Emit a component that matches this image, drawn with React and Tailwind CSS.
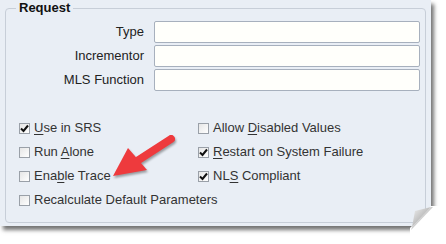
import React from "react";

const fields = ["Type", "Incrementor", "MLS Function"];

// label text with one underlined letter (access key)
const Key = ({ text, at }) => {
  if (at < 0) return <span>{text}</span>;
  return (
    <span>
      {text.slice(0, at)}
      <span className="underline underline-offset-2">{text[at]}</span>
      {text.slice(at + 1)}
    </span>
  );
};

const Check = ({ checked, text, at }) => (
  <label className="flex items-center h-[24px] gap-[4px] text-[13px] text-[#333] whitespace-nowrap">
    <span className="w-[11px] h-[11px] border border-[#9aa0a8] bg-gradient-to-br from-[#e6e6e6] to-white flex items-center justify-center">
      {checked && (
        <svg width="9" height="9" viewBox="0 0 9 9">
          <path d="M1 4.5 L3.5 7 L8 1.5" fill="none" stroke="#111" strokeWidth="2" />
        </svg>
      )}
    </span>
    <Key text={text} at={at} />
  </label>
);

export default function App() {
  return (
    <div
      className="relative w-[446px] h-[244px] bg-white"
      style={{ fontFamily: '"Liberation Sans", Arial, sans-serif' }}
    >
      <div className="w-[431px] h-[226px] bg-[#e9eef5] px-[5px] shadow-[3px_4px_4px_rgba(0,0,0,0.55)]">
        <fieldset className="h-[223px] border border-[#c7ced8] rounded-[4px] pl-[1px] pr-[4px]">
          <legend className="ml-[9px] px-[3px] text-[13px] leading-[16px] font-bold text-[#111]">
            Request
          </legend>
          <div className="mt-[5px] flex flex-col gap-[2px]">
            {fields.map((f) => (
              <div key={f} className="flex items-center">
                <span className="w-[137px] text-right text-[13px] text-[#222]">{f}</span>
                <input className="ml-[10px] w-[266px] h-[22px] bg-[#fffffb] border border-[#a7b0bd] rounded-[2px] outline-none" />
              </div>
            ))}
          </div>
          <div className="mt-[25px] pl-[12px] grid grid-cols-[179px_1fr]">
            <Check checked text="Use in SRS" at={0} />
            <Check text="Allow Disabled Values" at={6} />
            <Check text="Run Alone" at={4} />
            <Check checked text="Restart on System Failure" at={0} />
            <Check text="Enable Trace" at={3} />
            <Check checked text="NLS Compliant" at={2} />
            <div className="col-span-2">
              <Check text="Recalculate Default Parameters" at={-1} />
            </div>
          </div>
        </fieldset>
      </div>

      {/* page curl */}
      <svg className="absolute left-[405px] top-[202px]" width="41" height="42" viewBox="0 0 41 42">
        <defs>
          <linearGradient id="curl" x1="0" y1="0" x2="1" y2="1">
            <stop offset="0" stopColor="#f2f2f2" />
            <stop offset="1" stopColor="#8e8e8e" />
          </linearGradient>
        </defs>
        <polygon points="26,4 41,4 41,42 5,42 5,26" fill="#fff" />
        <polygon points="26,5 7,25 6,28 8,26 28,5" fill="#888" opacity="0.4" />
        <polygon points="26,5 7,25 10,9" fill="url(#curl)" />
      </svg>

      {/* red arrow */}
      <svg className="absolute left-[105px] top-[131px] drop-shadow-[1px_2px_1px_rgba(0,0,0,0.35)]" width="75" height="55" viewBox="0 0 75 55">
        <path d="M66 8 L32 30" stroke="#ee3a3d" strokeWidth="8" strokeLinecap="round" />
        <polygon points="8,45 23,17 42,39" fill="#ee3a3d" />
      </svg>
    </div>
  );
}
